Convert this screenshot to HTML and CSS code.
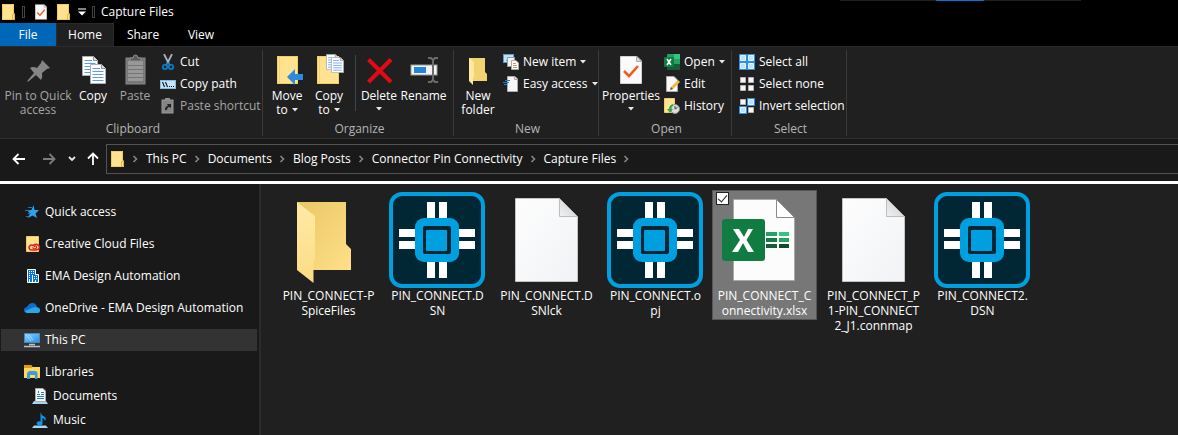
FILE: index.html
```html
<!DOCTYPE html>
<html lang="en">
<head>
<meta charset="utf-8">
<meta name="viewport" content="width=device-width, initial-scale=1">
<title>Capture Files</title>
<link rel="stylesheet" href="styles.css">
</head>
<body>
<svg class="defs" aria-hidden="true">
  <defs>
    <linearGradient id="g-folder" x1="0" y1="0" x2="1" y2="1"><stop offset="0" stop-color="#e9c765"/><stop offset="1" stop-color="#ffe089"/></linearGradient>
    <linearGradient id="g-flap" x1="0" y1="0" x2="0" y2="1"><stop offset="0" stop-color="#ffeaa6"/><stop offset="1" stop-color="#fbdc83"/></linearGradient>
    <linearGradient id="g-page" x1="0" y1="0" x2="1" y2="1"><stop offset="0" stop-color="#fdfdfd"/><stop offset="1" stop-color="#f1f3f6"/></linearGradient>
    <linearGradient id="g-fold" x1="0" y1="1" x2="1" y2="0"><stop offset="0" stop-color="#f2f2f2"/><stop offset="1" stop-color="#c9c9c9"/></linearGradient>
    <linearGradient id="g-screen" x1="0" y1="0" x2="1" y2="1"><stop offset="0" stop-color="#8fd3ff"/><stop offset="1" stop-color="#1e90f0"/></linearGradient>
    <symbol id="folder-s" viewBox="0 0 14 16"><path d="M0 0H12V9L13 10V16H0Z" fill="#ffdf7e"/><path d="M.5 .5H11.500V15.500H.5Z" fill="#ffe391" stroke="#f3cc5e"/><path d="M10.500 10.500H12.500V15.500H10.500Z" fill="#ffe391" stroke="#e3b53e"/></symbol>
    <symbol id="blank" viewBox="0 0 96 96"><path d="M17.500 6.500H61.500L79.500 24.500V89.500H17.500Z" fill="url(#g-page)" stroke="#c4c4c4"/><path d="M61.500 6.500V24.500H79.500Z" fill="url(#g-fold)" stroke="#bdbdbd"/></symbol>
    <symbol id="chip" viewBox="0 0 96 96">
      <rect x="2" y="2" width="92" height="92" rx="11" fill="#002733" stroke="#009fe0" stroke-width="4"/>
      <path d="M38 10h8v76h-8zM50 10h8v76h-8zM10 37h76v8H10zM10 49h76v8H10z" fill="#fff"/>
      <rect x="26" y="26" width="44" height="44" rx="9" fill="#009fe0"/>
      <rect x="34" y="34" width="28" height="28" rx="2" fill="#002733"/>
      <rect x="37" y="38" width="21" height="21" rx="1" fill="#009fe0"/>
    </symbol>
    <symbol id="folder-l" viewBox="0 0 96 96"><path d="M17 10H66V52L71 57V78H17Z" fill="url(#g-folder)"/><path d="M17 10L35 24V68L33.500 70V91L17 78Z" fill="url(#g-flap)"/></symbol>
    <symbol id="tick-page" viewBox="0 0 22 28"><path d="M.5 .5H17L21.500 5V27.500H.5Z" fill="#fafafa" stroke="#d3d3d3"/><path d="M16.500 .5V5.500H21.500Z" fill="#ddd" stroke="#aaa"/><path d="M4 15L9 20L18 10" fill="none" stroke="#f25b1d" stroke-width="2.600"/></symbol>
    <symbol id="lined" viewBox="0 0 16 20"><path d="M.5 .5H11.500L15.500 4.500V19.500H.5Z" fill="#fff" stroke="#a9b0b8"/><path d="M11.500 .5V4.500H15.500" fill="#ddd" stroke="#8d949c"/><path d="M2.500 4.500H10M2.500 7.500H13.500M2.500 10.500H13.500M2.500 13.500H13.500M2.500 16.500H13.500" stroke="#5e9bf0"/></symbol>
    <symbol id="crumb" viewBox="0 0 6 8"><path d="M1.500 1L4.500 4L1.500 7" fill="none" stroke="#8a8a8a" stroke-width="1.500"/></symbol>
    <symbol id="drop" viewBox="0 0 6 4"><path d="M0 0H6L3 3.500Z" fill="#e6e6e6"/></symbol>
  </defs>
</svg>

<header class="titlebar">
  <span class="edge"></span>
  <svg width="14" height="16"><use href="#folder-s"/></svg>
  <span class="grip"></span>
  <button class="qa-props" aria-label="Properties"><svg width="12" height="16"><use href="#tick-page"/></svg></button>
  <button class="qa-new" aria-label="New folder"><svg width="14" height="16"><use href="#folder-s"/></svg></button>
  <button class="qa-more" aria-label="Customize toolbar"><svg width="8" height="8" viewBox="0 0 8 8"><path d="M0 1H8" stroke="#fff"/><path d="M0 3.500H8L4 7.500Z" fill="#fff"/></svg></button>
  <span class="grip"></span>
  <h1>Capture Files</h1>
</header>

<nav class="tabs" aria-label="Ribbon tabs">
  <button class="tab file">File</button><button class="tab active">Home</button><button class="tab">Share</button><button class="tab">View</button>
</nav>

<section class="ribbon" aria-label="Home">
  <div class="group clipboard">
    <div class="tools">
      <button class="big dim"><svg width="32" height="32" viewBox="0 0 32 32"><path d="M20 6L28 14L25 15L20 19Q21 23 19 26L14 21L7 27L5 28L6 26L12 19L8 14Q11 12 15 14L19 9Z" fill="#858585"/></svg>Pin to Quick<br>access</button>
      <button class="big"><svg width="32" height="32" viewBox="0 0 32 32"><svg x="5" y="2" width="16" height="20"><use href="#lined"/></svg><svg x="13" y="10" width="16" height="20"><use href="#lined"/></svg></svg>Copy</button>
      <button class="big dim"><svg width="32" height="32" viewBox="0 0 32 32"><rect x="7" y="4" width="19" height="26" fill="#777" stroke="#888"/><rect x="9" y="7" width="15" height="20" fill="#999"/><path d="M9 11.500H24M9 15.500H24M9 19.500H24M9 23.500H24" stroke="#757575"/><path d="M11 4H14Q14 1 16.500 1T19 4H22V7H11Z" fill="#5d5d5d" stroke="#8e8e8e"/></svg>Paste</button>
      <div class="smalls">
        <button class="small"><svg width="16" height="16" viewBox="0 0 16 16"><path d="M4 0L9 10M12 0L7 10" stroke="#a9b2ba" stroke-width="1.800"/><circle cx="5" cy="13" r="2.200" fill="none" stroke="#0d83d8" stroke-width="1.600"/><circle cx="11" cy="13" r="2.200" fill="none" stroke="#0d83d8" stroke-width="1.600"/><path d="M6 11L8 9L10 11" fill="none" stroke="#0d83d8" stroke-width="1.400"/></svg>Cut</button>
        <button class="small"><svg width="16" height="16" viewBox="0 0 16 16"><rect x=".5" y="4.500" width="15" height="8" fill="#c5e5fb" stroke="#7dbdf0"/><path d="M2.500 6L4.500 11M5.500 6L7.500 11M9 10.500h1M11 10.500h1M13 10.500h1" stroke="#111" stroke-width="1.100"/></svg>Copy path</button>
        <button class="small dim"><svg width="16" height="16" viewBox="0 0 16 16"><rect x="2" y="2" width="11" height="13" fill="#858585" stroke="#9a9a9a"/><rect x="5" y="0" width="5" height="3" fill="#8e8e8e"/><path d="M5 12Q5 8 8 8L7 6H11V10L9.500 9Q7 9 7 12Z" fill="#222"/></svg>Paste shortcut</button>
      </div>
    </div>
    <h2>Clipboard</h2>
  </div>

  <div class="group organize">
    <div class="tools">
      <button class="big"><svg width="32" height="32" viewBox="0 0 32 32"><rect x="6.500" y="2.500" width="20" height="27" fill="#ffe391" stroke="#f0ce6a"/><path d="M8.500 3V29" stroke="#f3d272"/><path d="M16 23L24 15V20H32V26H24V31Z" fill="#2a8be0"/></svg>Move<span>to <svg class="drop" width="6" height="4"><use href="#drop"/></svg></span></button>
      <button class="big"><svg width="32" height="32" viewBox="0 0 32 32"><rect x="4.500" y="2.500" width="21" height="27" fill="#ffe391" stroke="#f0ce6a"/><path d="M6.500 3V29" stroke="#f3d272"/><svg x="13" y="0" width="13" height="16"><use href="#lined"/></svg><svg x="18" y="3" width="13" height="16"><use href="#lined"/></svg></svg>Copy<span>to <svg class="drop" width="6" height="4"><use href="#drop"/></svg></span></button>
      <span class="rule"></span>
      <button class="big"><svg width="32" height="32" viewBox="0 0 32 32"><path d="M5.500 5.500L28 28M28 5.500L5.500 28" stroke="#e30b13" stroke-width="4"/></svg>Delete<svg class="drop" width="6" height="4"><use href="#drop"/></svg></button>
      <button class="big"><svg width="32" height="32" viewBox="0 0 32 32"><rect x="3" y="11" width="26" height="10" fill="#f4f4f4" stroke="#9a9a9a"/><rect x="6" y="13" width="12" height="6" fill="#2585dc"/><path d="M20 4H23L25 6L27 4H30M25 6V26M20 28H23L25 26L27 28H30" fill="none" stroke="#6b6b6b" stroke-width="2"/></svg>Rename</button>
    </div>
    <h2>Organize</h2>
  </div>

  <div class="group new">
    <div class="tools">
      <button class="big"><svg width="32" height="32" viewBox="0 0 32 32"><path d="M7 4H23V18L25 20V27H7Z" fill="#f3d272"/><path d="M7 4L12 8V23L11 24V31L7 27Z" fill="#ffe9a2"/></svg>New<br>folder</button>
      <div class="smalls">
        <button class="small"><svg width="16" height="16" viewBox="0 0 16 16"><rect x=".5" y=".5" width="10" height="8" fill="#bfe0fa" stroke="#5a9bd0"/><path d="M3 7L6 3L8 6" fill="#276fa8"/><rect x="4.500" y="3.500" width="7" height="9" fill="#f4f4f4" stroke="#999"/><path d="M8.500 6.500H13L15.500 9V15.500H8.500Z" fill="#fff" stroke="#aaa"/><path d="M10 9.500h3M10 11.500h4M10 13.500h4" stroke="#e58b7e"/></svg>New item<svg class="drop" width="6" height="4"><use href="#drop"/></svg></button>
        <button class="small"><svg width="16" height="16" viewBox="0 0 16 16"><path d="M4.500 .5H12L14.500 3V15.500H4.500Z" fill="#f7f7f7" stroke="#aaa"/><path d="M11.500 .5V3.500H14.500" fill="#ddd" stroke="#aaa"/><path d="M2 4.500H7M0 6.500H6M1 8.500H4" stroke="#1b7fd0"/></svg>Easy access<svg class="drop" width="6" height="4"><use href="#drop"/></svg></button>
      </div>
    </div>
    <h2>New</h2>
  </div>

  <div class="group open">
    <div class="tools">
      <button class="big"><svg width="32" height="32" viewBox="0 0 32 32"><svg x="5" y="2" width="22" height="28"><use href="#tick-page"/></svg></svg>Properties<svg class="drop" width="6" height="4"><use href="#drop"/></svg></button>
      <div class="smalls">
        <button class="small"><svg width="16" height="16" viewBox="0 0 16 16"><rect x="3" width="13" height="16" rx="1" fill="#21a366"/><path d="M10 0H16V5H10Z" fill="#33c481"/><path d="M3 8H16V16H3Z" fill="#185c37"/><path d="M10 5H16V10H10Z" fill="#21a366"/><rect y="3" width="10" height="10" rx="1" fill="#107c41"/><path d="M3 5L7 11M7 5L3 11" stroke="#fff" stroke-width="1.600"/></svg>Open<svg class="drop" width="6" height="4"><use href="#drop"/></svg></button>
        <button class="small"><svg width="16" height="16" viewBox="0 0 16 16"><path d="M2.500 .5H10L13.500 4V15.500H2.500Z" fill="#f8f8f8" stroke="#aaa"/><path d="M6 14L7 11L14 4L16 6L9 13Z" fill="#f3b93b"/><path d="M6 14L7 11L9 13Z" fill="#555"/></svg>Edit</button>
        <button class="small"><svg width="16" height="16" viewBox="0 0 16 16"><path d="M.5 .5H10.500V14.500H.5Z" fill="#ffe391" stroke="#f0ce6a"/><circle cx="11" cy="11" r="4.500" fill="#ddd" stroke="#909090"/><path d="M11 8V11L13.500 9.500" fill="none" stroke="#444"/><path d="M3 11H5Q5 7 9 6V8Q7 9 7.500 11H9L6 15Z" fill="#35a94a"/></svg>History</button>
      </div>
    </div>
    <h2>Open</h2>
  </div>

  <div class="group select">
    <div class="tools">
      <div class="smalls">
        <button class="small"><svg width="16" height="16" viewBox="0 0 16 16"><path d="M0 0H16V16H0Z" fill="#2d8fe3"/><path d="M1.500 1.500h5v5h-5zM9.500 1.500h5v5h-5zM1.500 9.500h5v5h-5zM9.500 9.500h5v5h-5z" fill="#bfe1fb" stroke="#e3f3ff"/></svg>Select all</button>
        <button class="small"><svg width="16" height="16" viewBox="0 0 16 16"><path d="M1.500 1.500h5v5h-5zM9.500 1.500h5v5h-5zM1.500 9.500h5v5h-5zM9.500 9.500h5v5h-5z" fill="#f6f6f6" stroke="#b5b5b5"/></svg>Select none</button>
        <button class="small"><svg width="16" height="16" viewBox="0 0 16 16"><path d="M1.500 1.500h5v5h-5zM9.500 9.500h5v5h-5z" fill="#f6f6f6" stroke="#b5b5b5"/><path d="M8 0h8v8H8zM0 8h8v8H0z" fill="#2d8fe3"/><path d="M9.500 1.500h5v5h-5zM1.500 9.500h5v5h-5z" fill="#bfe1fb" stroke="#e3f3ff"/></svg>Invert selection</button>
      </div>
    </div>
    <h2>Select</h2>
  </div>
</section>

<div class="location">
  <div class="history">
    <button aria-label="Back"><svg width="14" height="12" viewBox="0 0 14 12"><path d="M13 6H2M6.500 1L1.500 6L6.500 11" fill="none" stroke="#fff" stroke-width="1.800"/></svg></button>
    <button class="forward" aria-label="Forward"><svg width="14" height="12" viewBox="0 0 14 12"><path d="M1 6H12M7.500 1L12.500 6L7.500 11" fill="none" stroke="#7c7c7c" stroke-width="1.800"/></svg></button>
    <button class="recent" aria-label="Recent locations"><svg width="8" height="6" viewBox="0 0 8 6"><path d="M1 1L4 4L7 1" fill="none" stroke="#e6e6e6" stroke-width="1.800"/></svg></button>
    <button class="up" aria-label="Up"><svg width="12" height="14" viewBox="0 0 12 14"><path d="M6 13V2M1 6.500L6 1.500L11 6.500" fill="none" stroke="#fff" stroke-width="1.800"/></svg></button>
  </div>
  <nav class="address" aria-label="Address">
    <svg width="14" height="16"><use href="#folder-s"/></svg>
    <svg width="6" height="8"><use href="#crumb"/></svg><a href="#">This PC</a>
    <svg width="6" height="8"><use href="#crumb"/></svg><a href="#">Documents</a>
    <svg width="6" height="8"><use href="#crumb"/></svg><a href="#">Blog Posts</a>
    <svg width="6" height="8"><use href="#crumb"/></svg><a href="#">Connector Pin Connectivity</a>
    <svg width="6" height="8"><use href="#crumb"/></svg><a href="#">Capture Files</a>
    <svg width="6" height="8"><use href="#crumb"/></svg>
  </nav>
</div>

<div class="panes">
  <nav class="tree" aria-label="Folders">
    <a href="#"><svg width="16" height="16" viewBox="0 0 16 16"><path d="M9.500 1L10.500 6H15L11.500 9.500L13 14L8.500 11.500L4 14L6 9.500L3 6H7.500Z" fill="#2ba3f2"/><path d="M4 3.500H8M1 6.500H6M4 9.500H7M2 12.500H5" stroke="#1679bd"/></svg>Quick access</a>
    <a href="#"><svg width="16" height="16" viewBox="0 0 16 16"><path d="M2.500 .5H14.500V15.500H2.500Z" fill="#ffe391" stroke="#f3cc5e"/><path d="M8 14A2.500 2.500 0 1 1 9 9.500Q13 7 15 10T12 14Z" fill="none" stroke="#da1f26" stroke-width="1.600"/><path d="M8.500 11.500L10 13Q13 13 12.500 11T10 11" fill="none" stroke="#da1f26" stroke-width="1.200"/></svg>Creative Cloud Files</a>
    <a href="#"><svg width="16" height="16" viewBox="0 0 16 16"><path d="M3.500 1.500H11.500V6.500H14.500V14.500H3.500Z" fill="#0a78d4" stroke="#fff"/><path d="M5 3h1v1H5zM7 3h1v1H7zM9 3h1v1H9zM5 5h1v1H5zM7 5h1v1H7zM9 5h1v1H9zM5 7h1v1H5zM5 9h1v1H5zM5 11h1v3H5zM8 7h1v8H8zM10 8h1v1h-1zM12 8h1v1h-1zM10 10h1v1h-1zM12 10h1v1h-1zM11 12h1v3h-1z" fill="#fff"/></svg>EMA Design Automation</a>
    <a href="#"><svg width="16" height="16" viewBox="0 0 16 16"><path d="M3 13Q0 12.500 0 10T3 7Q5 3 8.500 3T13 7Q16 7.500 16 10T13 13Z" fill="#0f6fc6"/><path d="M3 13Q1.500 12.500 1 11L9 7.500Q11 6.500 13 7.500Q16 8 16 10.500T13 13Z" fill="#28a8ea"/></svg>OneDrive - EMA Design Automation</a>
    <a href="#" class="current"><svg width="16" height="16" viewBox="0 0 16 16"><rect x=".5" y="1.500" width="15" height="9" fill="url(#g-screen)" stroke="#4d87ad"/><path d="M2 3L7 9M5 3L9 8" stroke="#a9ddff"/><path d="M5 12.500H11M0 14.500H16" stroke="#b8c4cc" stroke-width="1.500"/></svg>This PC</a>
    <a href="#"><svg width="16" height="16" viewBox="0 0 16 16"><path d="M0 1H7L8.500 3H16V14H0Z" fill="#ffd75e"/><path d="M0 1H7L8.500 3L7.500 4H0Z" fill="#e09a13"/><path d="M3 9L5 7H12L13.500 9V15H11V11H6V15H3Z" fill="#3b9ae0"/></svg>Libraries</a>
    <a href="#" class="sub"><svg width="16" height="16" viewBox="0 0 16 16"><path d="M0 16L2 13H14L16 16Z" fill="#a9d3ec"/><path d="M3.500 .5H11L13.500 3V13.500H3.500Z" fill="#f8f8f8" stroke="#aaa"/><path d="M5 6.500H8M9 4.500H12M9 6.500H12M5 8.500H12M5 10.500H12M6.500 3V5" stroke="#2380c4"/></svg>Documents</a>
    <a href="#" class="sub"><svg width="16" height="16" viewBox="0 0 16 16"><path d="M0 16L2 13.500H14L16 16Z" fill="#a9d3ec"/><path d="M8.500 0Q9 3 12 4.500T13 9Q12.500 6 10.500 6V12A3 2 0 1 1 8.500 9.500Z" fill="#0c96ed"/></svg>Music</a>
  </nav>
  <main class="files">
    <a href="#" class="item"><svg width="96" height="96"><use href="#folder-l"/></svg>PIN_CONNECT-P<br>SpiceFiles</a>
    <a href="#" class="item"><svg width="96" height="96"><use href="#chip"/></svg>PIN_CONNECT.D<br>SN</a>
    <a href="#" class="item"><svg width="96" height="96"><use href="#blank"/></svg>PIN_CONNECT.D<br>SNlck</a>
    <a href="#" class="item"><svg width="96" height="96"><use href="#chip"/></svg>PIN_CONNECT.o<br>pj</a>
    <div class="item picked">
      <input type="checkbox" checked aria-label="Select PIN_CONNECT_Connectivity.xlsx">
      <svg width="96" height="96" viewBox="0 0 96 96"><path d="M17.500 7.500H60.500L78.500 25.500V88.500H17.500Z" fill="#fcfcfc" stroke="#a8a8a8"/><path d="M60.500 7.500V25.500H78.500Z" fill="#fff" stroke="#8a8a8a"/><rect x="6" y="27" width="43" height="42" rx="3" fill="#107c41"/><path d="M17 37H23L28 45L32 37H37L30.500 48L38 60H32L27 51L22 60H16L24 48Z" fill="#fff"/><path d="M50 40h11v4H50z" fill="#21a366"/><path d="M63 40h10v4H63z" fill="#33c481"/><path d="M50 46h11v4H50z" fill="#107c41"/><path d="M63 46h10v4H63z" fill="#21a366"/><path d="M50 52h11v4H50z" fill="#185c37"/><path d="M63 52h10v4H63z" fill="#144a2c"/></svg>
      <a href="#">PIN_CONNECT_C<br>onnectivity.xlsx</a>
    </div>
    <a href="#" class="item"><svg width="96" height="96"><use href="#blank"/></svg>PIN_CONNECT_P<br>1-PIN_CONNECT<br>2_J1.connmap</a>
    <a href="#" class="item"><svg width="96" height="96"><use href="#chip"/></svg>PIN_CONNECT2.<br>DSN</a>
  </main>
</div>
</body>
</html>
```

FILE: styles.css
```css
* { box-sizing: border-box; }
body {
  margin: 0;
  min-height: 100vh;
  display: flex;
  flex-direction: column;
  background: #191919;
  color: #fff;
  font: 12px/16px "Open Sans", "Noto Sans", sans-serif;
}
svg { display: block; flex: none; }
.defs { position: absolute; width: 0; height: 0; }
a { color: inherit; text-decoration: none; }
button { margin: 0; padding: 0; border: 0; background: none; color: inherit; font: inherit; }
h1, h2 { margin: 0; font: inherit; }

.titlebar {
  position: relative;
  display: flex;
  align-items: center;
  height: 23px;
  padding-left: 2px;
  background: #000;
}
.edge {
  position: absolute;
  top: 0;
  right: 97px;
  width: 241px;
  height: 1px;
  background: linear-gradient(90deg, #202020 96px, #0078d7 96px 144px, #202020 144px);
}
.grip { width: 3px; height: 12px; margin: 0 10px 0 6px; border: 1px solid #444; }
.qa-props { margin-right: 10px; }
.qa-more { margin: 0 6px 0 7px; }
.titlebar .grip:last-of-type { margin: 0 6px 0 0; }

.tabs { display: flex; height: 23px; background: #000; }
.tab { width: 58px; height: 23px; }
.file { width: 56px; background: #0067b8; }
.active { background: #202020; border: 1px solid #2b2b2b; border-bottom: 0; }

.ribbon {
  display: flex;
  height: 93px;
  padding-top: 3px;
  background: #202020;
  border-top: 1px solid #2b2b2b;
  border-bottom: 1px solid #2f2f2f;
}
.group { padding-left: 3px; border-right: 1px solid #3a3a3a; height: 86px; }
.clipboard { width: 263px; padding-left: 4px; }
.organize { width: 191px; }
.new { width: 145px; }
.open { width: 133px; }
.select { width: 115px; }
.group h2 { text-align: center; color: #b5b5b5; }
.tools { display: flex; height: 71px; }
.big {
  display: flex;
  flex: none;
  flex-direction: column;
  align-items: center;
  width: 42px;
  padding-top: 4px;
  line-height: 14px;
  white-space: nowrap;
}
.big > svg:first-child { margin-bottom: 3px; }
.clipboard .big:first-child { width: 68px; }
.organize .big:last-child { width: 47px; }
.open .big { width: 58px; }
.big > .drop { margin-top: 4px; }
.big span { display: flex; align-items: center; gap: 4px; }
.dim { color: #a6a6a6; }
.rule { flex: none; width: 1px; height: 56px; margin: 5px 2px 0 5px; background: #444; }
.smalls { display: flex; flex-direction: column; padding: 1px 4px 0; }
.small { display: flex; align-items: center; gap: 4px; height: 22px; white-space: nowrap; }

.location { display: flex; align-items: center; height: 42px; padding-bottom: 2px; }
.history { display: flex; align-items: center; width: 106px; padding-left: 12px; }
.history .forward { margin-left: 16px; }
.history .recent { margin-left: 12px; }
.history .up { margin-left: 11px; }
.address {
  flex: 1;
  display: flex;
  align-items: center;
  height: 30px;
  padding-left: 4px;
  border: 1px solid #535353;
  border-right: 0;
}
.address > svg + svg { margin-left: 7px; }
.address a { padding: 0 7px 0 8px; white-space: nowrap; }

.panes { flex: 1; display: flex; border-top: 3px solid #fff; }
.tree {
  display: flex;
  flex: none;
  flex-direction: column;
  gap: 10px;
  width: 261px;
  padding: 17px 2px 0 1px;
  border-right: 2px solid #2b2b2b;
}
.tree a { display: flex; align-items: center; gap: 5px; height: 22px; padding-left: 23px; white-space: nowrap; }
.tree .current { background: #333; }
.tree .sub { padding-left: 31px; margin-top: -8px; }
.files { flex: 1; display: flex; align-items: flex-start; gap: 4px; padding: 6px 0 0 15px; background: #202020; }
.item {
  position: relative;
  display: block;
  flex: none;
  width: 105px;
  padding: 2px 0;
  text-align: center;
  line-height: 15px;
}
.item svg { margin-left: 4px; }
.picked { background: #777; outline: 1px solid #555; outline-offset: -1px; }
.picked input {
  position: absolute;
  left: 4px;
  top: 2px;
  width: 13px;
  height: 13px;
  margin: 0;
  appearance: none;
  border: 1px solid #222;
  background: #fff;
}
.picked input:checked::after {
  content: "";
  position: absolute;
  left: 3px;
  top: 0;
  width: 4px;
  height: 8px;
  border: solid #222;
  border-width: 0 1px 1px 0;
  transform: rotate(40deg);
}
```
